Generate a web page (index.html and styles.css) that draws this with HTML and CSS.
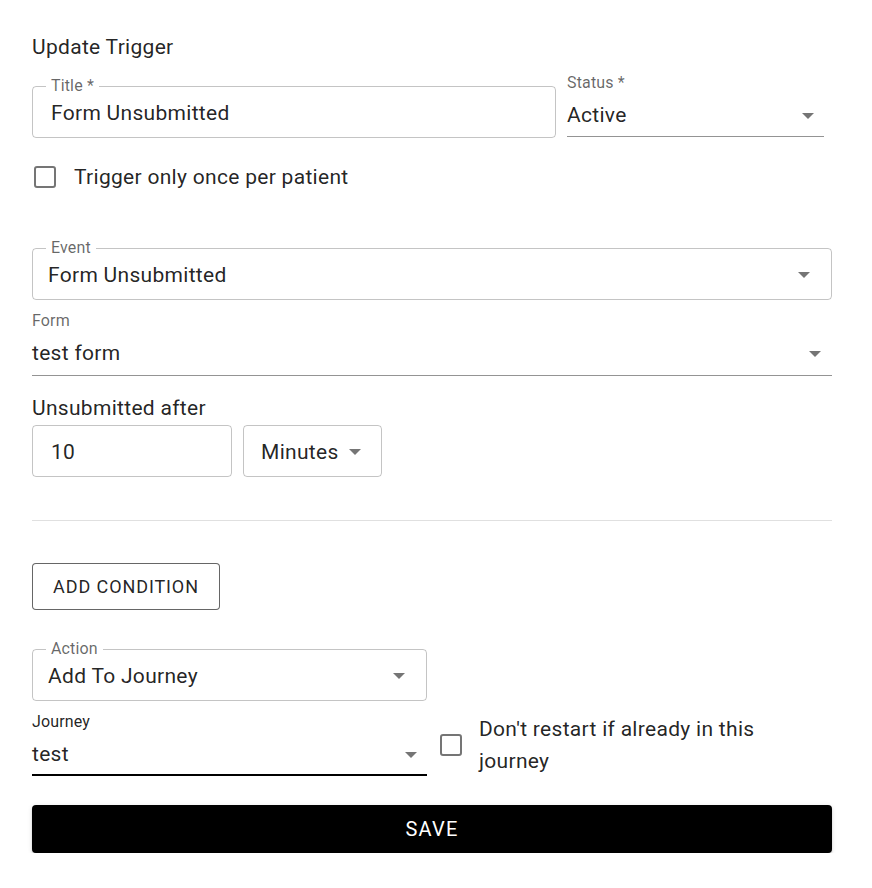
FILE: index.html
```html
<!DOCTYPE html>
<html>
<head>
<meta charset="utf-8">
<link rel="stylesheet" href="styles.css">
</head>
<body>
<div class="page">
  <h1 class="heading">Update Trigger</h1>

  <div class="row-top">
    <div class="outlined title-field">
      <span class="float-label">Title *</span>
      <span class="value pad-title">Form Unsubmitted</span>
    </div>
    <div class="std status-field">
      <div class="std-label">Status *</div>
      <div class="std-value">
        <span>Active</span>
        <svg class="arrow" viewBox="7 10 10 5"><path d="M7 10l5 5 5-5z"/></svg>
      </div>
    </div>
  </div>

  <label class="check-row once-row">
    <span class="checkbox"></span>
    <span class="check-text">Trigger only once per patient</span>
  </label>

  <div class="outlined event-field">
    <span class="float-label">Event</span>
    <span class="value">Form Unsubmitted</span>
    <svg class="arrow arrow-out" viewBox="7 10 10 5"><path d="M7 10l5 5 5-5z"/></svg>
  </div>

  <div class="std form-field">
    <div class="std-label">Form</div>
    <div class="std-value">
      <span>test form</span>
      <svg class="arrow arrow-form" viewBox="7 10 10 5"><path d="M7 10l5 5 5-5z"/></svg>
    </div>
  </div>

  <div class="section-label">Unsubmitted after</div>
  <div class="row-after">
    <div class="box num-box"><span class="value pad-title">10</span></div>
    <div class="box unit-box">
      <span class="unit-value">Minutes</span>
      <svg class="arrow arrow-unit" viewBox="7 10 10 5"><path d="M7 10l5 5 5-5z"/></svg>
    </div>
  </div>

  <hr class="divider">

  <button class="btn-outline">ADD CONDITION</button>

  <div class="outlined action-field">
    <span class="float-label">Action</span>
    <span class="value">Add To Journey</span>
    <svg class="arrow arrow-out" viewBox="7 10 10 5"><path d="M7 10l5 5 5-5z"/></svg>
  </div>

  <div class="row-journey">
    <div class="std journey-field">
      <div class="std-label focused">Journey</div>
      <div class="std-value focused-line">
        <span>test</span>
        <svg class="arrow" viewBox="7 10 10 5"><path d="M7 10l5 5 5-5z"/></svg>
      </div>
    </div>
    <label class="check-row restart-row">
      <span class="checkbox"></span>
      <span class="check-text two-line">Don't restart if already in this journey</span>
    </label>
  </div>

  <button class="btn-save">SAVE</button>
</div>
</body>
</html>
```

FILE: styles.css
```css
* { box-sizing: border-box; }
html, body { margin: 0; background: #fff; }
body {
  font-family: Roboto, "Noto Sans", "Liberation Sans", sans-serif;
  color: rgba(0, 0, 0, 0.87);
}
.page {
  width: 800px;
  margin-left: 32px;
  padding-top: 33px;
}
.heading {
  margin: 0;
  font-size: 21px;
  font-weight: 400;
  line-height: 28px;
  letter-spacing: 0.3px;
}
.row-top {
  display: flex;
  gap: 11px;
  margin-top: 13px;
  align-items: flex-start;
}
.outlined, .box {
  position: relative;
  height: 52px;
  border: 1px solid rgba(0, 0, 0, 0.23);
  border-radius: 4px;
  display: flex;
  align-items: center;
  padding: 2px 15px 0 15px;
}
.title-field { width: 524px; margin-top: 12px; }
.float-label {
  position: absolute;
  top: -10px;
  left: 13px;
  padding: 0 5px;
  background: #fff;
  font-size: 16px;
  line-height: 18px;
  letter-spacing: 0.15px;
  color: rgba(0, 0, 0, 0.6);
}
.value {
  font-size: 21px;
  line-height: 28px;
  letter-spacing: 0.3px;
  flex: 1;
  white-space: nowrap;
}
.pad-title { padding-left: 3px; }
.std { position: relative; }
.status-field { width: 257px; }
.std-label {
  font-size: 16px;
  line-height: 18px;
  letter-spacing: 0.15px;
  color: rgba(0, 0, 0, 0.6);
}
.std-label.focused { color: rgba(0, 0, 0, 0.87); }
.std-value {
  display: flex;
  align-items: center;
  font-size: 21px;
  line-height: 28px;
  letter-spacing: 0.3px;
  padding: 9px 0 7px 0;
  border-bottom: 1px solid rgba(0, 0, 0, 0.42);
}
.std-value span { flex: 1; }
.arrow {
  width: 12px;
  height: 6px;
  fill: rgba(0, 0, 0, 0.54);
  flex: none;
  margin-right: 10px;
  margin-top: 2px;
}
.arrow-out { margin-right: 6px; margin-top: 0; }
.arrow-form { margin-right: 11px; }
.check-row {
  display: flex;
  align-items: center;
}
.once-row {
  height: 42px;
  margin-top: 18px;
}
.checkbox {
  width: 22px;
  height: 22px;
  border: 2px solid rgba(0, 0, 0, 0.54);
  border-radius: 3px;
  flex: none;
  margin-left: 2px;
}
.check-text {
  font-size: 21px;
  line-height: 28px;
  letter-spacing: 0.3px;
  margin-left: 18px;
}
.event-field { margin-top: 50px; width: 800px; }
.form-field { margin-top: 12px; }
.form-field .std-value { padding: 9px 0 8px 0; }
.section-label {
  margin-top: 18px;
  font-size: 21px;
  line-height: 28px;
  letter-spacing: 0.3px;
}
.row-after {
  display: flex;
  gap: 11px;
  margin-top: 3px;
}
.num-box { width: 200px; height: 52px; }
.unit-box { width: 139px; height: 52px; padding-left: 17px; }
.unit-value {
  font-size: 21px;
  line-height: 28px;
  letter-spacing: 0.3px;
}
.arrow-unit { margin-left: 10px; margin-right: 0; margin-top: 0; }
.divider {
  margin: 43px 0 0 0;
  border: 0;
  border-top: 1px solid rgba(0, 0, 0, 0.12);
}
.btn-outline {
  display: block;
  margin-top: 42px;
  width: 188px;
  height: 47px;
  background: #fff;
  border: 1px solid rgba(0, 0, 0, 0.6);
  border-radius: 4px;
  font-family: inherit;
  font-size: 18px;
  letter-spacing: 0.9px;
  color: rgba(0, 0, 0, 0.87);
  padding: 0;
}
.action-field { margin-top: 39px; width: 395px; }
.row-journey {
  display: flex;
  margin-top: 12px;
  align-items: flex-start;
}
.journey-field { width: 395px; }
.journey-field .std-value {
  padding: 9px 0 6px 0;
  border-bottom: 2px solid #000;
}
.restart-row { margin-left: 11px; margin-top: 0; }
.two-line {
  line-height: 32px;
  width: 300px;
  margin-left: 17px;
}
.btn-save {
  display: block;
  margin-top: 28px;
  width: 800px;
  height: 48px;
  border: 0;
  border-radius: 4px;
  background: #000;
  color: #fff;
  font-family: inherit;
  font-size: 20px;
  letter-spacing: 1.2px;
  box-shadow: 0 3px 1px -2px rgba(0,0,0,0.2), 0 2px 2px 0 rgba(0,0,0,0.14), 0 1px 5px 0 rgba(0,0,0,0.12);
}
```
